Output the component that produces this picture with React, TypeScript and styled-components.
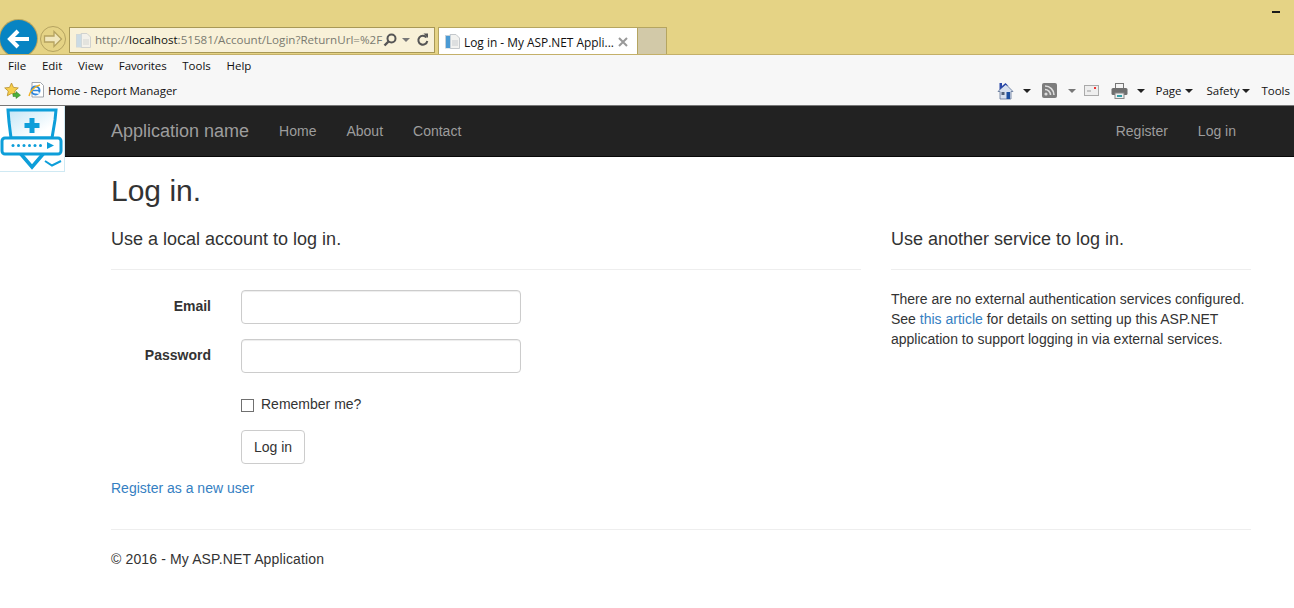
import React from "react";
import styled, { createGlobalStyle } from "styled-components";

const Global = createGlobalStyle`
  html, body { margin: 0; padding: 0; background: #fff; }
  body { font-family: "Liberation Sans", Arial, sans-serif; font-size: 14px; line-height: 20px; color: #333; }
  * { box-sizing: border-box; }
`;

const Page = styled.div`
  position: relative;
  width: 1294px;
  height: 608px;
  overflow: hidden;
`;

const TitleBar = styled.header`
  height: 55px;
  background: #e5d385;
  border-bottom: 1px solid #c4b069;
  display: flex;
  align-items: flex-start;
  padding: 20px 0 0 0;
  overflow: hidden;
`;

const BackButton = styled.div`
  width: 37px;
  height: 37px;
  border-radius: 50%;
  background: #0784c3;
  box-shadow: 0 0 0 1px #b9a65f;
  display: flex;
  align-items: center;
  justify-content: center;
  flex: none;
  margin-right: 3px;
`;

const ForwardButton = styled.div`
  width: 26px;
  height: 26px;
  margin: 6px 3px 0 0;
  border-radius: 50%;
  border: 1px solid #b5a360;
  display: flex;
  align-items: center;
  justify-content: center;
  flex: none;
`;

const AddressBar = styled.div`
  width: 366px;
  height: 26px;
  margin-top: 7px;
  background: #f8f1d8;
  border: 1px solid #a89856;
  display: flex;
  align-items: center;
  padding: 0 5px 0 5px;
  flex: none;
  font-family: "Open Sans", sans-serif;
  font-size: 11.6px;
  color: #7a7a70;
  white-space: nowrap;
`;

const UrlText = styled.span`
  margin-left: 3px;
  flex: 1;
  b { font-weight: 400; color: #111; }
`;

const AddressTools = styled.div`
  display: flex;
  align-items: center;
  gap: 5px;
  flex: none;
`;

const Tab = styled.div`
  width: 200px;
  height: 28px;
  margin: 7px 0 0 3px;
  background: #fff;
  border: 1px solid #b5a560;
  border-bottom: none;
  display: flex;
  align-items: center;
  padding: 0 9px 0 5px;
  flex: none;
  font-family: "Open Sans", sans-serif;
  font-size: 11.9px;
  color: #111;
  white-space: nowrap;
`;

const TabLabel = styled.span`
  margin-left: 3px;
  flex: 1;
`;

const NewTab = styled.div`
  width: 29px;
  height: 27px;
  margin-top: 7px;
  background: #d2c9a8;
  border: 1px solid #b5a560;
  border-left: none;
  border-bottom: none;
  flex: none;
`;

const WindowControls = styled.div`
  margin-left: auto;
  width: 23px;
  flex: none;
  position: relative;
  height: 30px;
  margin-top: -20px;
`;

const Minimize = styled.span`
  position: absolute;
  left: 1px;
  top: 11px;
  width: 8px;
  height: 2px;
  background: #1a1a1a;
`;

const MenuRow = styled.nav`
  height: 22px;
  background: #f7f7f7;
  display: flex;
  align-items: center;
  gap: 15.7px;
  padding: 0 0 0 8px;
  font-family: "Open Sans", sans-serif;
  font-size: 11.5px;
  color: #111;
`;

const MenuItem = styled.span<{ $tight?: boolean }>`
  line-height: 16px;
  letter-spacing: ${(p) => (p.$tight ? "-0.1px" : "0")};
`;

const FavRow = styled.div`
  height: 28px;
  background: #f7f7f7;
  display: flex;
  align-items: center;
  padding: 0 4px 1px 4px;
  font-family: "Open Sans", sans-serif;
  font-size: 11.5px;
  color: #111;
  white-space: nowrap;
`;

const FavLink = styled.span`
  margin: 0 0 0 7px;
  display: flex;
  align-items: center;
  gap: 4px;
`;

const CommandBar = styled.div`
  margin-left: auto;
  display: flex;
  align-items: center;
`;

const Command = styled.span<{ $gap?: number }>`
  display: flex;
  align-items: center;
  gap: 3px;
  margin-left: ${(p) => p.$gap ?? 0}px;
`;

const Caret = styled.span<{ $muted?: boolean; $gap?: number }>`
  display: inline-block;
  width: 0;
  height: 0;
  border-left: 4px solid transparent;
  border-right: 4px solid transparent;
  border-top: 4px solid ${(p) => (p.$muted ? "#777" : "#222")};
  margin-left: ${(p) => p.$gap ?? 0}px;
`;

const Navbar = styled.div`
  height: 52px;
  background: #222;
  border-top: 1px solid #777;
  border-bottom: 1px solid #080808;
  display: flex;
  align-items: center;
  padding: 0 43px 0 111px;
  color: #9d9d9d;
`;

const Brand = styled.span`
  font-size: 18px;
  margin-right: 30px;
`;

const NavLink = styled.span<{ $gap?: number }>`
  margin-right: ${(p) => p.$gap ?? 30}px;
`;

const NavRight = styled.div`
  margin-left: auto;
  display: flex;
  padding-right: 15px;
`;

const Logo = styled.div`
  position: absolute;
  left: 0;
  top: 106px;
  width: 65px;
  height: 66px;
  background: #fff;
  border-right: 1px solid #cfe9f3;
  border-bottom: 1px solid #cfe9f3;
`;

const Main = styled.main`
  padding: 0 43px 0 111px;
`;

const Title = styled.h2`
  margin: 0;
  padding-top: 17px;
  height: 62px;
  font-size: 30px;
  line-height: 33px;
  font-weight: 500;
  color: #333;
`;

const Columns = styled.div`
  display: grid;
  grid-template-columns: 750px 360px;
  column-gap: 30px;
  margin-top: 0;
`;

const SubTitle = styled.h4`
  margin: 10px 0 10px;
  font-size: 18px;
  line-height: 20px;
  font-weight: 500;
  color: #333;
`;

const Rule = styled.hr`
  border: 0;
  border-top: 1px solid #eee;
  margin: 20px 0 19px;
`;

const FormRow = styled.div`
  display: grid;
  grid-template-columns: 100px 280px;
  column-gap: 30px;
  align-items: start;
  margin-bottom: 15px;
`;

const FieldLabel = styled.label`
  font-weight: 700;
  text-align: right;
  padding-top: 6px;
`;

const TextInput = styled.input`
  display: block;
  width: 280px;
  height: 34px;
  border: 1px solid #ccc;
  border-radius: 4px;
  background: #fff;
  box-shadow: inset 0 1px 1px rgba(0, 0, 0, 0.075);
`;

const Form = styled.form`
  margin: 20px 0 0;
`;

const CheckRow = styled.div`
  margin-left: 130px;
  padding-top: 6px;
  height: 42px;
  display: flex;
  align-items: flex-start;
`;

const CheckBox = styled.span`
  width: 13px;
  height: 13px;
  border: 1px solid #707070;
  background: #fff;
  margin: 5px 7px 0 0;
  flex: none;
`;

const ButtonRow = styled.div`
  margin-left: 130px;
  margin-bottom: 14px;
`;

const Button = styled.button`
  display: block;
  height: 34px;
  width: 64px;
  padding: 0;
  font: inherit;
  color: #333;
  background: #fff;
  border: 1px solid #ccc;
  border-radius: 4px;
`;

const Link = styled.a`
  color: #3580c2;
  text-decoration: none;
`;

const Para = styled.p`
  margin: 0;
  width: 360px;
`;

const Footer = styled.footer`
  margin-top: 31px;
  border-top: 1px solid #eee;
  padding-top: 19px;
  letter-spacing: 0.13px;
`;

const DocIcon = ({ dim }: { dim?: boolean }) => (
  <svg width="17" height="17" viewBox="0 0 17 17" style={{ flex: "none", opacity: dim ? 0.75 : 1 }}>
    <path d="M6 1.500h6l3.500 3.500v10.500H6z" fill="#f2f2f0" stroke="#c4c8cc" />
    <rect x="1.500" y="2.500" width="5" height="12.500" fill="#dfe8f0" stroke="#c4d0da" />
    <rect x="2" y="3" width="4" height="12" fill={dim ? "#bcd4e8" : "#4a9ad4"} />
    <path d="M8 8h6M8 10h6M8 12h6" stroke="#c8ccd0" />
  </svg>
);

const HomeIcon = () => (
  <svg width="17" height="18" viewBox="0 0 17 18">
    <path d="M8.500 2 1 9.500h2V17h11V9.500h2z" fill="#d7e0ee" stroke="#5f7397" strokeWidth=".8" />
    <path d="M2.500 1h2.500v3L8.500 1l3 3-3-1-6 5z" fill="#2a48a8" />
    <rect x="9.500" y="10" width="3.500" height="7" fill="#1c4fa0" />
    <rect x="4.500" y="10" width="3" height="3" fill="#51617a" />
  </svg>
);

const FeedIcon = () => (
  <svg width="15" height="15" viewBox="0 0 15 15">
    <rect width="15" height="15" rx="2" fill="#7d7d7d" />
    <circle cx="4" cy="11" r="1.600" fill="#ddd" />
    <path d="M3 6.500a5.500 5.500 0 0 1 5.500 5.500M3 3a9 9 0 0 1 9 9" fill="none" stroke="#ddd" strokeWidth="1.600" />
  </svg>
);

const MailIcon = () => (
  <svg width="15" height="11" viewBox="0 0 15 11">
    <rect x=".5" y=".5" width="14" height="10" fill="#eee" stroke="#aaa" />
    <path d="M3 6h4" stroke="#999" />
    <rect x="10" y="2" width="2" height="2" fill="#e33" />
  </svg>
);

const PrintIcon = () => (
  <svg width="17" height="16" viewBox="0 0 17 16">
    <rect x="4.500" y=".5" width="8" height="5" fill="#f4f4f4" stroke="#777" />
    <rect x=".5" y="5" width="16" height="7" rx="1.500" fill="#6e6e6e" />
    <rect x="4" y="10" width="9" height="5.500" fill="#eee" stroke="#888" />
    <rect x="6" y="12" width="5" height="2" fill="#36a0a8" />
  </svg>
);

const FavStar = () => (
  <svg width="17" height="17" viewBox="0 0 17 17">
    <path d="M7.500 1l2 4.400 4.800.5-3.600 3.200 1 4.700-4.200-2.400-4.200 2.400 1-4.700L.7 5.900l4.800-.5z" fill="#f7cf4c" stroke="#b98f2a" strokeWidth=".8" />
    <path d="M9 11.500h3V9.500l4.500 3.700-4.500 3.300v-2H9z" fill="#4caf3d" stroke="#2f7f27" strokeWidth=".5" />
  </svg>
);

const IeIcon = () => (
  <svg width="16" height="17" viewBox="0 0 16 17">
    <path d="M4 .5h8.500l3 3V15H4z" fill="#fff" stroke="#8a9099" strokeWidth=".8" />
    <circle cx="7.500" cy="8.500" r="4" fill="none" stroke="#2f86dc" strokeWidth="2" />
    <path d="M3.500 8.500h8" stroke="#2f86dc" strokeWidth="1.500" />
    <path d="M11.500 11h-3" stroke="#fff" strokeWidth="1.500" />
    <path d="M1 14c1-5 6-10 11-11" stroke="#f0b020" fill="none" strokeWidth="1.400" />
  </svg>
);

const LogoMark = () => (
  <svg width="64" height="65" viewBox="0 0 64 65">
    <defs>
      <linearGradient id="sh" x1="0" y1="0" x2="1" y2="1">
        <stop offset="0" stopColor="#c3e6f6" />
        <stop offset="0.75" stopColor="#fff" />
      </linearGradient>
    </defs>
    <path d="M8 4h48l-1 10-3 18H11L9 16z" fill="url(#sh)" stroke="#0d9ed9" strokeWidth="3" />
    <rect x="29.500" y="12" width="5" height="15" fill="#0d9ed9" />
    <rect x="24.500" y="17" width="15" height="5" fill="#0d9ed9" />
    <path d="M20 47l12 14 12-14" fill="#fff" stroke="#0d9ed9" strokeWidth="3.500" />
    <path d="M5 32h53a3 3 0 0 1 3 3v10a3 3 0 0 1-3 3H5a3 3 0 0 1-3-3V35a3 3 0 0 1 3-3z" fill="#fff" stroke="#0d9ed9" strokeWidth="3" />
    <g fill="#0d9ed9">
      <circle cx="13" cy="39.500" r="1.500" /><circle cx="18.500" cy="39.500" r="1.500" /><circle cx="24" cy="39.500" r="1.500" />
      <circle cx="29.500" cy="39.500" r="1.500" /><circle cx="35" cy="39.500" r="1.500" /><circle cx="40.500" cy="39.500" r="1.500" />
      <path d="M47 36l7 3.500-7 3.500z" />
    </g>
    <path d="M45 55l7 4.500 9-4.500" fill="none" stroke="#0d9ed9" strokeWidth="2" />
  </svg>
);

export default function App() {
  return (
    <Page>
      <Global />
      <TitleBar>
        <BackButton>
          <svg width="24" height="20" viewBox="0 0 24 20">
            <path d="M11 2 3 10l8 8M3 10h19" fill="none" stroke="#fff" strokeWidth="4" />
          </svg>
        </BackButton>
        <ForwardButton>
          <svg width="20" height="18" viewBox="0 0 20 18">
            <path d="M11 1.500 18.500 9 11 16.500V12H1.500V6H11z" fill="#f1e7bd" stroke="#b5a360" strokeWidth="1.300" />
          </svg>
        </ForwardButton>
        <AddressBar>
          <DocIcon dim />
          <UrlText>
            http://<b>localhost</b>:51581/Account/Login?ReturnUrl=%2F
          </UrlText>
          <AddressTools>
            <svg width="14" height="14" viewBox="0 0 14 14">
              <circle cx="8.500" cy="5.500" r="4" fill="none" stroke="#555" strokeWidth="2" />
              <path d="M5.500 8.500 1.500 12.500" stroke="#555" strokeWidth="2.400" />
            </svg>
            <Caret $muted />
            <svg width="13" height="14" viewBox="0 0 13 14" style={{ marginLeft: 1 }}>
              <path d="M10.500 4.500a4.500 4.500 0 1 0 .8 3.500" fill="none" stroke="#555" strokeWidth="2" />
              <path d="M7.500 0.500h4.500v4.500z" fill="#555" />
            </svg>
          </AddressTools>
        </AddressBar>
        <Tab>
          <DocIcon />
          <TabLabel>Log in - My ASP.NET Appli...</TabLabel>
          <svg width="10" height="10" viewBox="0 0 10 10">
            <path d="M1 1l8 8M9 1 1 9" stroke="#999" strokeWidth="2" />
          </svg>
        </Tab>
        <NewTab />
        <WindowControls>
          <Minimize />
        </WindowControls>
      </TitleBar>
      <MenuRow>
        <MenuItem>File</MenuItem>
        <MenuItem>Edit</MenuItem>
        <MenuItem>View</MenuItem>
        <MenuItem $tight>Favorites</MenuItem>
        <MenuItem>Tools</MenuItem>
        <MenuItem>Help</MenuItem>
      </MenuRow>
      <FavRow>
        <FavStar />
        <FavLink>
          <IeIcon />
          Home - Report Manager
        </FavLink>
        <CommandBar>
          <HomeIcon />
          <Caret $gap={9} />
          <Command $gap={11}><FeedIcon /></Command>
          <Caret $muted $gap={11} />
          <Command $gap={8}><MailIcon /></Command>
          <Command $gap={12}><PrintIcon /></Command>
          <Caret $gap={9} />
          <Command $gap={11}>Page<Caret /></Command>
          <Command $gap={14}>Safety<Caret /></Command>
          <Command $gap={11}>Tools</Command>
        </CommandBar>
      </FavRow>
      <Navbar>
        <Brand>Application name</Brand>
        <NavLink>Home</NavLink>
        <NavLink>About</NavLink>
        <NavLink>Contact</NavLink>
        <NavRight>
          <NavLink>Register</NavLink>
          <NavLink $gap={0}>Log in</NavLink>
        </NavRight>
      </Navbar>
      <Logo>
        <LogoMark />
      </Logo>
      <Main>
        <Title>Log in.</Title>
        <Columns>
          <section>
            <SubTitle>Use a local account to log in.</SubTitle>
            <Rule />
            <Form as="div">
              <FormRow>
                <FieldLabel>Email</FieldLabel>
                <TextInput />
              </FormRow>
              <FormRow>
                <FieldLabel>Password</FieldLabel>
                <TextInput />
              </FormRow>
              <CheckRow>
                <CheckBox />
                Remember me?
              </CheckRow>
              <ButtonRow>
                <Button>Log in</Button>
              </ButtonRow>
              <Link>Register as a new user</Link>
            </Form>
          </section>
          <section>
            <SubTitle>Use another service to log in.</SubTitle>
            <Rule />
            <Para>
              There are no external authentication services configured. See <Link>this article</Link> for
              details on setting up this ASP.NET application to support logging in via external services.
            </Para>
          </section>
        </Columns>
        <Footer>© 2016 - My ASP.NET Application</Footer>
      </Main>
    </Page>
  );
}
